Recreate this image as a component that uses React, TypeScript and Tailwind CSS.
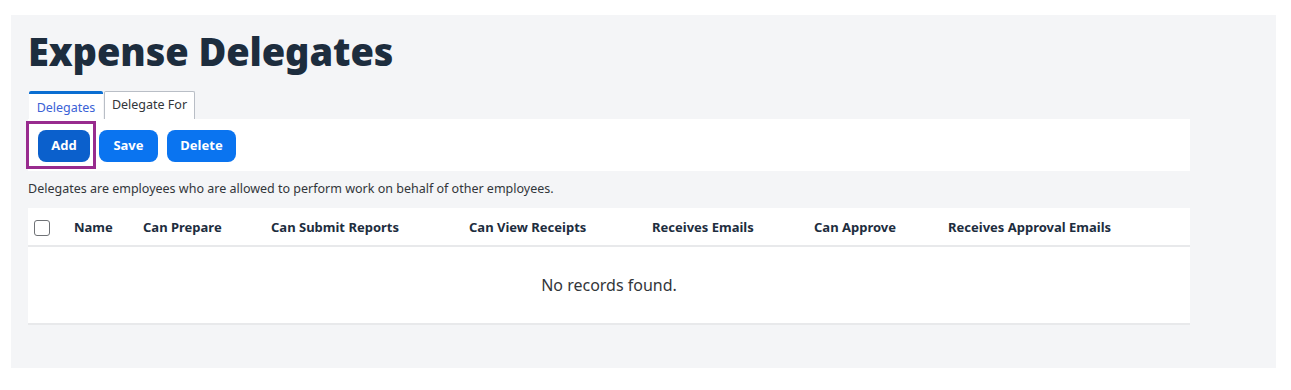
import React from "react";

const cols = [
  { label: "Name", w: "w-[69px]" },
  { label: "Can Prepare", w: "w-[128px]" },
  { label: "Can Submit Reports", w: "w-[198px]" },
  { label: "Can View Receipts", w: "w-[183px]" },
  { label: "Receives Emails", w: "w-[162px]" },
  { label: "Can Approve", w: "w-[134px]" },
  { label: "Receives Approval Emails", w: "w-[200px]" },
];

export default function App() {
  return (
    <div
      className="w-[1291px] h-[390px] bg-white pt-[15px] pl-[11px]"
      style={{ fontFamily: '"Noto Sans", "Open Sans", Arial, sans-serif' }}
    >
      <div className="w-[1265px] h-[353px] bg-[#f4f5f7] pl-[17px] flex flex-col">
        {/* Title */}
        <div className="h-[76px] pt-[13px]">
          <h1 className="text-[38px] leading-[46px] font-black text-[#1d2d3e] tracking-[-0.1px]">
            Expense Delegates
          </h1>
        </div>

        {/* Tabs */}
        <div className="h-[28px] flex items-end">
          <div className="ml-[1px] w-[74px] h-[28px] bg-white border-t-[3px] border-[#0a6ed1] rounded-t-[2px] flex items-center justify-center text-[12.5px] text-[#3b62d6] pt-[3px]">
            Delegates
          </div>
          <div className="ml-[1px] w-[91px] h-[28px] bg-white border border-b-0 border-[#b9bec6] rounded-t-[2px] flex items-center justify-center text-[12.5px] text-[#32363a]">
            Delegate For
          </div>
        </div>

        {/* Toolbar */}
        <div className="w-[1162px] h-[52px] bg-white flex items-start pt-[2px]">
          <div className="-ml-[2px] border-[3px] border-[#982b8e] pt-[6px] pb-[4px] pl-[9px] pr-[3px]">
            <button className="w-[52px] h-[32px] rounded-[8px] bg-[#0b60cc] text-white text-[13px] font-bold flex items-center justify-center">
              Add
            </button>
          </div>
          <button className="ml-[3px] mt-[9px] w-[59px] h-[32px] rounded-[8px] bg-[#0a74f0] text-white text-[13px] font-bold flex items-center justify-center">
            Save
          </button>
          <button className="ml-[9px] mt-[9px] w-[69px] h-[32px] rounded-[8px] bg-[#0a74f0] text-white text-[13px] font-bold flex items-center justify-center">
            Delete
          </button>
        </div>

        {/* Description */}
        <div className="h-[37px] flex items-center text-[12.5px] text-[#32363a]">
          Delegates are employees who are allowed to perform work on behalf of other employees.
        </div>

        {/* Table */}
        <div className="w-[1162px] bg-white">
          <div className="h-[39px] flex items-center pt-[3px] border-b-2 border-[#e8e9eb]">
            <div className="w-[46px] pl-[6px] flex items-center">
              <div className="w-[16px] h-[16px] rounded-[3px] border border-[#6f7276] bg-white" />
            </div>
            {cols.map((c) => (
              <div
                key={c.label}
                className={`${c.w} text-[13px] font-bold text-[#1d2d3e] whitespace-nowrap`}
              >
                {c.label}
              </div>
            ))}
          </div>
          <div className="h-[78px] flex items-center justify-center border-b-2 border-[#e8e9eb] text-[16px] text-[#32363a]">
            No records found.
          </div>
        </div>
      </div>
    </div>
  );
}
